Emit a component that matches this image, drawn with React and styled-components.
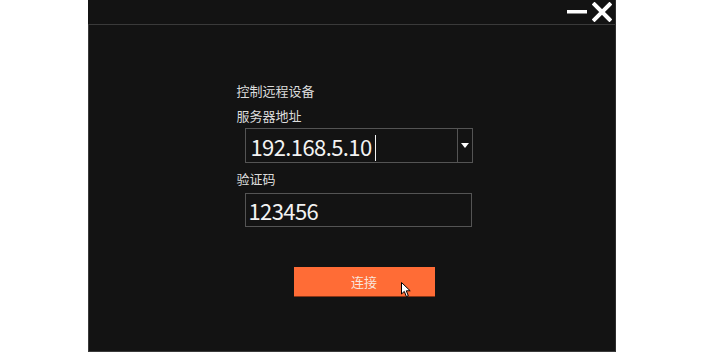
import styled, { createGlobalStyle } from "styled-components";

const GlobalStyle = createGlobalStyle`
  html, body {
    margin: 0;
    padding: 0;
    background: #ffffff;
  }
  body {
    font-family: "Noto Sans CJK SC", "Noto Sans", sans-serif;
  }
`;

export default function App() {
  return (
    <Page>
      <GlobalStyle />
      <Window>
        <TitleBar>
          <WinButton aria-label="minimize">
            <svg width="20" height="20" viewBox="0 0 20 20">
              <rect x="0" y="10" width="20" height="3.5" fill="#fff" />
            </svg>
          </WinButton>
          <WinButton aria-label="close">
            <svg width="20" height="20" viewBox="0 0 20 20">
              <path
                d="M2.5 2.5 L17.5 17.5 M17.5 2.5 L2.5 17.5"
                stroke="#fff"
                strokeWidth="4"
                strokeLinecap="square"
              />
            </svg>
          </WinButton>
        </TitleBar>
        <Content>
          <Form>
            <Label>控制远程设备</Label>
            <Label $top={7}>服务器地址</Label>
            <Field $top={3} $height={35} $pad={5}>
              <Value>192.168.5.10</Value>
              <Caret />
              <Spacer />
              <DropButton>
                <svg width="8" height="5" viewBox="0 0 8 5">
                  <path d="M0 0 H8 L4 5 Z" fill="#fff" />
                </svg>
              </DropButton>
            </Field>
            <Label $top={7}>验证码</Label>
            <Field $top={5} $height={34} $width={227} $pad={3}>
              <Value>123456</Value>
            </Field>
            <ConnectRow>
              <ConnectButton>
                连接
                <Pointer>
                  <svg width="12" height="16" viewBox="0 0 12 16">
                    <path
                      d="M0.5 0.5 L0.5 12 L3.3 9.4 L5.4 14.6 L7.3 13.8 L5.3 8.8 L9.2 8.8 Z"
                      fill="#fff"
                      stroke="#000"
                      strokeWidth="1"
                      strokeLinejoin="round"
                    />
                  </svg>
                </Pointer>
              </ConnectButton>
            </ConnectRow>
          </Form>
        </Content>
      </Window>
    </Page>
  );
}

const Page = styled.div`
  width: 704px;
  height: 352px;
  display: flex;
  padding-left: 88px;
  box-sizing: border-box;
`;

const Window = styled.div`
  width: 528px;
  height: 352px;
  background: #131313;
  display: flex;
  flex-direction: column;
  box-sizing: border-box;
  border-right: 1px solid #2e2e2e;
  border-bottom: 1px solid #3a3a3a;
`;

const TitleBar = styled.div`
  height: 24px;
  border-bottom: 1px solid #3a3a3a;
  display: flex;
  justify-content: flex-end;
  align-items: center;
  gap: 5px;
  padding-right: 3px;
  flex-shrink: 0;
`;

const WinButton = styled.div`
  width: 20px;
  height: 20px;
  display: flex;
  svg {
    display: block;
  }
  &:first-child svg {
    transform: translateY(-2px);
  }
`;

const Content = styled.div`
  flex: 1;
  border-left: 1px solid #3a3a3a;
  display: flex;
  justify-content: center;
  padding-top: 57px;
  padding-left: 5px;
`;

const Form = styled.div`
  width: 236px;
  display: flex;
  flex-direction: column;
`;

const Label = styled.div`
  margin-top: ${(p) => p.$top || 0}px;
  font-size: 13px;
  line-height: 18px;
  height: 18px;
  color: #dcdcdc;
`;

const Field = styled.div`
  margin-top: ${(p) => p.$top || 0}px;
  margin-left: 8px;
  width: ${(p) => p.$width || 228}px;
  height: ${(p) => p.$height}px;
  box-sizing: border-box;
  border: 1px solid #545454;
  display: flex;
  align-items: center;
  padding-left: ${(p) => p.$pad}px;
`;

const Value = styled.span`
  font-family: "Noto Sans CJK SC", "Noto Sans", sans-serif;
  font-size: 22px;
  letter-spacing: -0.6px;
  color: #f2f2f2;
  line-height: 1;
`;

const Caret = styled.span`
  width: 1px;
  height: 26px;
  margin-left: 3px;
  background: #f2f2f2;
  margin-top: 4px;
`;

const Spacer = styled.div`
  flex: 1;
`;

const DropButton = styled.div`
  width: 14px;
  height: 100%;
  border-left: 1px solid #545454;
  display: flex;
  align-items: center;
  justify-content: center;
`;

const ConnectRow = styled.div`
  margin-top: 40px;
  display: flex;
  padding-left: 57px;
`;

const ConnectButton = styled.div`
  position: relative;
  width: 141px;
  height: 30px;
  box-sizing: border-box;
  background: #ff6c36;
  border-bottom: 1px solid #8a3516;
  color: #f8e6de;
  font-size: 13px;
  display: flex;
  align-items: center;
  justify-content: center;
`;

const Pointer = styled.div`
  position: absolute;
  left: 107px;
  top: 15px;
  svg {
    display: block;
  }
`;
